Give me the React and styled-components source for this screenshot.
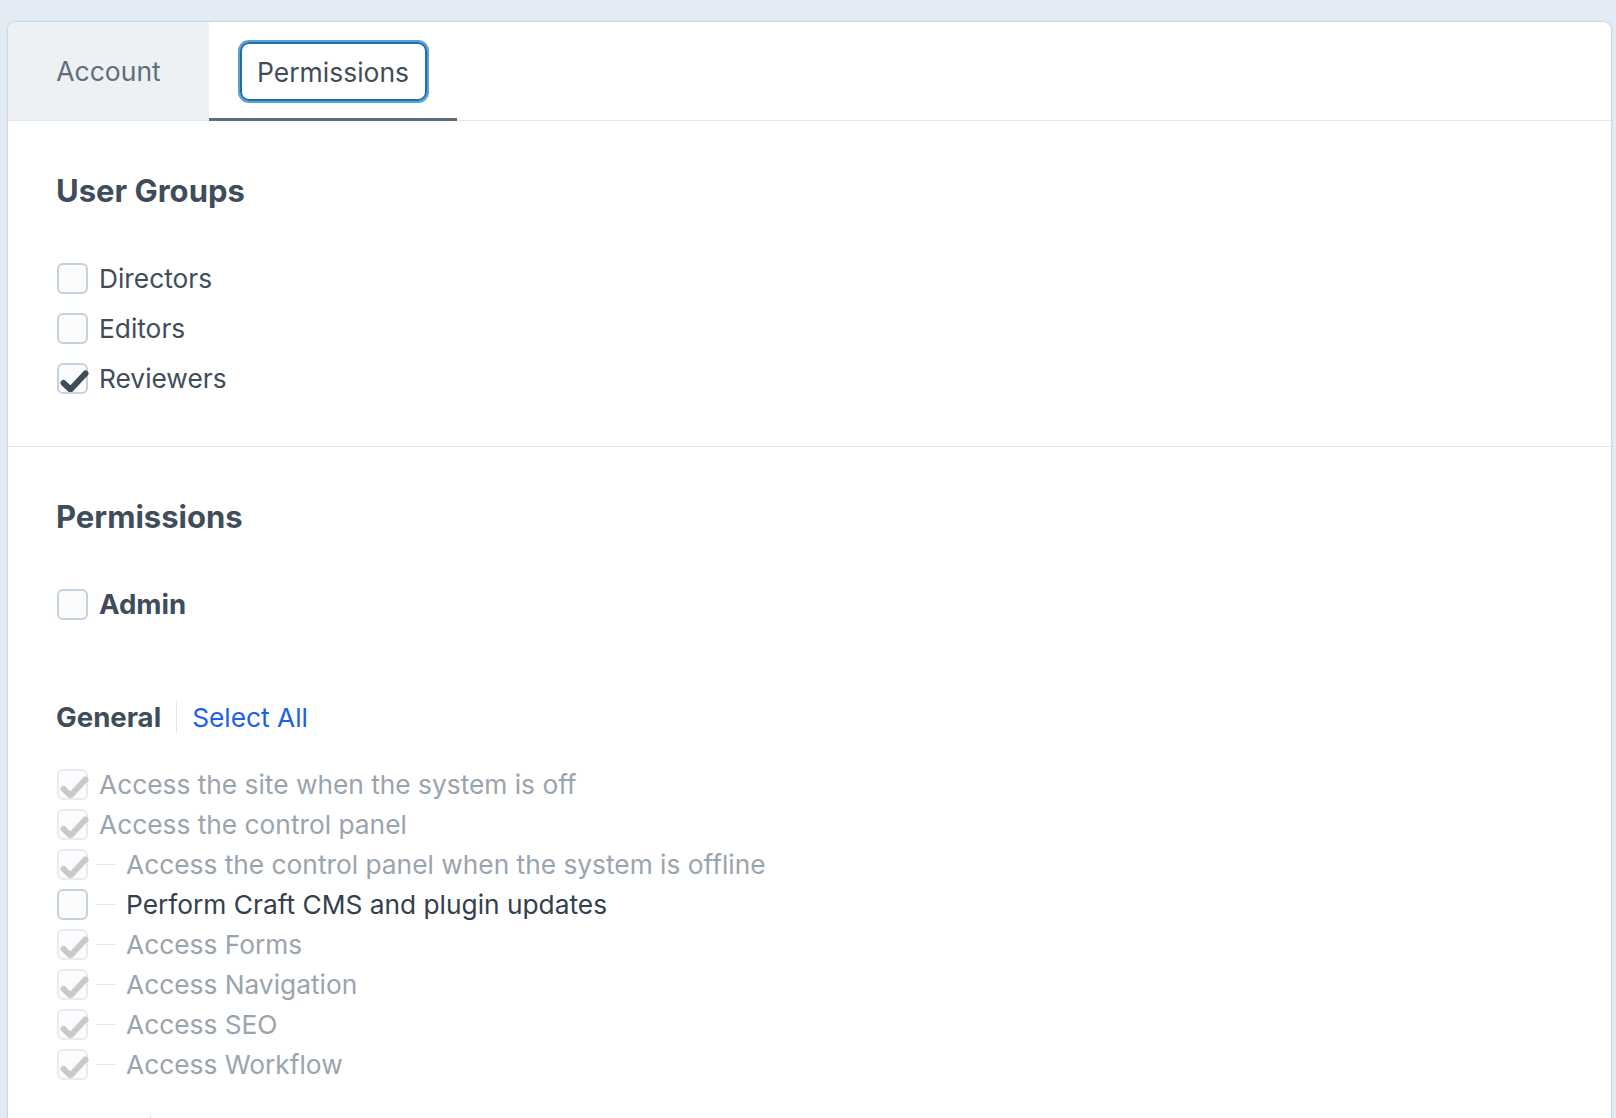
import React from 'react';
import styled, { createGlobalStyle } from 'styled-components';

const GlobalStyle = createGlobalStyle`
  html, body {
    margin: 0;
    background: #e3ecf4;
    font-family: Inter, "Noto Sans", sans-serif;
    color: #3f4d5a;
  }
`;

const Page = styled.div`
  padding: 21px 4px 0 7px;
  height: 1118px;
  box-sizing: border-box;
  overflow: hidden;
`;

const Card = styled.div`
  background: #fff;
  border: 1px solid #cfd9e5;
  border-bottom: none;
  border-radius: 9px 9px 0 0;
  box-shadow: 0 0 0 1px rgba(205, 216, 228, 0.35);
  overflow: hidden;
  min-height: 1200px;
`;

const TabBar = styled.div`
  display: flex;
  height: 98px;
  border-bottom: 1px solid #e3e5e8;
`;

const Tab = styled.div`
  position: relative;
  width: ${(p) => p.width}px;
  display: flex;
  align-items: center;
  justify-content: center;
  font-size: 26.5px;
  color: ${(p) => (p.active ? '#3f4d5a' : '#606d7b')};
  background: ${(p) => (p.active ? '#fff' : '#eef1f3')};
  &::after {
    content: '';
    display: ${(p) => (p.active ? 'block' : 'none')};
    position: absolute;
    left: 0;
    right: 0;
    bottom: -1px;
    height: 3px;
    background: #5f6c7a;
  }
`;

const FocusLabel = styled.span`
  box-sizing: border-box;
  width: 187px;
  height: 59px;
  display: flex;
  align-items: center;
  justify-content: center;
  border: 2px solid #1e6fa9;
  border-radius: 9px;
  box-shadow: 0 0 0 2px #5aa0d2;
  margin-top: 1px;
`;

const Section = styled.section`
  padding: ${(p) => p.pad || '51px 48px 43px'};
  border-bottom: ${(p) => (p.last ? 'none' : '1px solid #e3e5e8')};
`;

const Heading = styled.h2`
  margin: 0 0 43px;
  font-size: 31px;
  line-height: 38px;
  font-weight: 700;
  color: #3f4d5a;
`;

const Row = styled.label`
  display: flex;
  align-items: center;
  height: ${(p) => p.h || 50}px;
  font-size: ${(p) => (p.bold ? 27.6 : 26.3)}px;
  font-weight: ${(p) => (p.bold ? 700 : 400)};
  color: ${(p) => (p.disabled ? '#9aa4ae' : p.dark ? '#33404d' : '#3f4d5a')};
`;

const Box = styled.span`
  position: relative;
  box-sizing: border-box;
  flex: none;
  width: 31px;
  height: 31px;
  border: 2px solid ${(p) => (p.disabled ? '#e7ebf0' : '#c5d1de')};
  border-radius: 6px;
  background: #fbfcfe;
  margin-right: ${(p) => (p.indent ? 8 : 11)}px;
  margin-left: 1px;
`;

const Check = styled.svg`
  position: absolute;
  left: 1px;
  top: 4px;
  width: 29px;
  height: 23px;
`;

const Dash = styled.span`
  width: 20px;
  height: 1px;
  background: #e3e6ea;
  margin-right: 10px;
  flex: none;
`;

const GroupHead = styled.div`
  display: flex;
  align-items: center;
  height: 32px;
  margin: ${(p) => p.m || '0'};
  font-size: 26.3px;
`;

const GroupName = styled.span`
  font-size: 27.6px;
  font-weight: 700;
  color: #3f4d5a;
  padding-right: 15px;
  border-right: 1px solid #e3e5e8;
  line-height: 32px;
`;

const SelectAll = styled.a`
  color: #1c60ec;
  margin-left: 15px;
  text-decoration: none;
`;

const Tick = ({ color }) => (
  <Check viewBox="0 0 29 23">
    <path
      d="M3.5 14 L10.5 20.5 L25.5 4.5"
      fill="none"
      stroke={color}
      strokeWidth="6"
      strokeLinecap="round"
      strokeLinejoin="round"
    />
  </Check>
);

function Item({ label, checked, disabled, indent, bold, dark, h }) {
  return (
    <Row h={h} bold={bold} disabled={disabled} dark={dark}>
      <Box disabled={disabled} indent={indent}>
        {checked && <Tick color={disabled ? '#c9c9c9' : '#3f4d5a'} />}
      </Box>
      {indent && <Dash />}
      {label}
    </Row>
  );
}

const general = [
  { label: 'Access the site when the system is off', checked: true, disabled: true },
  { label: 'Access the control panel', checked: true, disabled: true },
  { label: 'Access the control panel when the system is offline', checked: true, disabled: true, indent: true },
  { label: 'Perform Craft CMS and plugin updates', indent: true, dark: true },
  { label: 'Access Forms', checked: true, disabled: true, indent: true },
  { label: 'Access Navigation', checked: true, disabled: true, indent: true },
  { label: 'Access SEO', checked: true, disabled: true, indent: true },
  { label: 'Access Workflow', checked: true, disabled: true, indent: true },
];

export default function App() {
  return (
    <>
      <GlobalStyle />
      <Page>
        <Card>
          <TabBar>
            <Tab width={201}>Account</Tab>
            <Tab width={248} active>
              <FocusLabel>Permissions</FocusLabel>
            </Tab>
          </TabBar>

          <Section>
            <Heading>User Groups</Heading>
            <Item label="Directors" />
            <Item label="Editors" />
            <Item label="Reviewers" checked />
          </Section>

          <Section last pad="51px 48px 0">
            <Heading>Permissions</Heading>
            <Item label="Admin" bold />

            <GroupHead m="72px 0 31px">
              <GroupName>General</GroupName>
              <SelectAll href="#">Select All</SelectAll>
            </GroupHead>
            {general.map((g) => (
              <Item key={g.label} h={40} {...g} />
            ))}

            <GroupHead m="30px 0 0">
              <GroupName>Users</GroupName>
              <SelectAll href="#">Select All</SelectAll>
            </GroupHead>
          </Section>
        </Card>
      </Page>
    </>
  );
}
